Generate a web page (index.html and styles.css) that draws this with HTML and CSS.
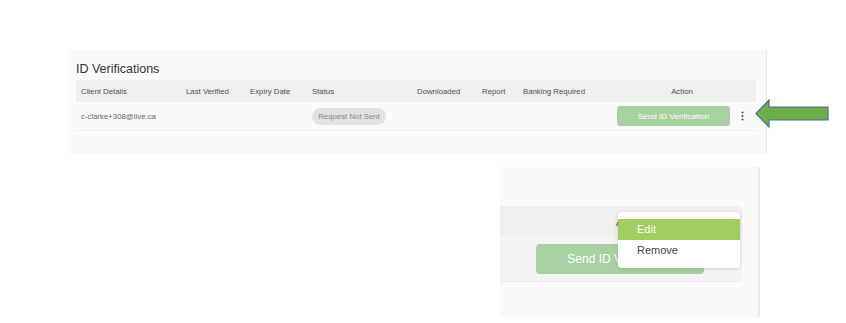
FILE: index.html
```html
<!DOCTYPE html>
<html lang="en">
<head>
  <meta charset="UTF-8">
  <meta name="viewport" content="width=device-width, initial-scale=1.0">
  <title>ID Verifications</title>
  <link rel="stylesheet" href="styles.css">
</head>
<body>
  <div class="panel">
    <h1 class="title">ID Verifications</h1>
    <div class="grid head">
      <div class="cell">Client Details</div>
      <div class="cell">Last Verified</div>
      <div class="cell">Expiry Date</div>
      <div class="cell">Status</div>
      <div class="cell">Downloaded</div>
      <div class="cell">Report</div>
      <div class="cell">Banking Required</div>
      <div class="cell action-head">Action</div>
    </div>
    <div class="grid row">
      <div class="cell">c-clarke+308@live.ca</div>
      <div class="cell"></div>
      <div class="cell"></div>
      <div class="cell"><span class="pill">Request Not Sent</span></div>
      <div class="cell"></div>
      <div class="cell"></div>
      <div class="cell"></div>
      <div class="cell action">
        <button class="send">Send ID Verification</button>
        <svg class="kebab" width="3" height="10" viewBox="0 0 3 10">
          <circle cx="1.5" cy="1.5" r="1" fill="#444"/>
          <circle cx="1.5" cy="5" r="1" fill="#444"/>
          <circle cx="1.5" cy="8.5" r="1" fill="#444"/>
        </svg>
      </div>
    </div>

    <!-- annotation arrow -->
    <svg class="arrow" width="76" height="30" viewBox="0 0 76 30">
      <polygon points="2,14.5 15,1 15,8 74,8 74,21 15,21 15,28" fill="#70ad47" stroke="#41719c" stroke-width="1.2" stroke-linejoin="miter"/>
    </svg>
  </div>

  <div class="panel zoomed">
    <div class="zoom-head"><span class="zoom-action">Action</span></div>
    <div class="zoom-row">
      <button class="send big">Send ID Verification</button>
    </div>

    <div class="menu">
      <div class="menu-item active">Edit</div>
      <div class="menu-item">Remove</div>
    </div>
  </div>
</body>
</html>
```

FILE: styles.css
```css
body {
  margin: 0;
  background: #ffffff;
  font-family: "Liberation Sans", Arial, sans-serif;
  color: #555;
}
.panel {
  position: relative;
  box-sizing: border-box;
  margin: 50px 0 0 68px;
  width: 699px;
  height: 104px;
  padding: 9px 10px 0 8px;
  background: #fafafa;
  border-right: 1px solid #e6e6e6;
}
.title {
  margin: 0;
  font-size: 12.5px;
  font-weight: normal;
  line-height: 21px;
  color: #333;
}
.grid {
  display: grid;
  grid-template-columns: 105px 64px 62px 105px 65px 41px 77px 162px;
  align-items: center;
}
.cell {
  padding-left: 5px;
  font-size: 7.8px;
  white-space: nowrap;
}
.head {
  height: 22px;
  background: #efefef;
  color: #505050;
}
.action-head {
  padding-left: 12px;
  text-align: center;
}
.row {
  height: 28px;
  border-bottom: 1px solid #ececec;
  color: #666;
}
.pill {
  display: inline-block;
  width: 74px;
  height: 17px;
  line-height: 17px;
  border-radius: 9px;
  background: #e2e2e2;
  color: #8a8a8a;
  text-align: center;
}
.action {
  display: flex;
  align-items: center;
  padding-left: 22px;
}
.send {
  width: 113px;
  height: 20px;
  padding: 0;
  border: none;
  border-radius: 3px;
  background: #a8d1a1;
  color: #ffffff;
  font-family: inherit;
  font-size: 8.1px;
}
.kebab {
  margin-left: 11px;
}
.arrow {
  position: absolute;
  left: 686px;
  top: 49px;
}

/* zoomed crop with open menu */
.zoomed {
  margin: 13px 0 0 500px;
  width: 260px;
  height: 150px;
  padding: 39px 16px 0 0;
  border-right: 2px solid #ececec;
}
.zoom-head {
  height: 31px;
  background: #efefef;
  display: flex;
  align-items: center;
  padding-left: 116px;
}
.zoom-action {
  font-size: 11.5px;
  color: #555;
}
.zoom-row {
  height: 44px;
  background: #f4f4f4;
  border-bottom: 1px solid #ececec;
  display: flex;
  align-items: center;
  padding-left: 36px;
}
.send.big {
  width: 168px;
  height: 30px;
  border-radius: 4px;
  font-size: 12px;
}
.menu {
  position: absolute;
  left: 118px;
  top: 45px;
  width: 122px;
  padding: 7px 0;
  background: #ffffff;
  border-radius: 4px;
  box-shadow: 0 1px 4px rgba(0, 0, 0, 0.15);
}
.menu-item {
  height: 21px;
  line-height: 21px;
  padding-left: 19px;
  font-size: 11px;
  color: #444;
}
.menu-item.active {
  background: #a0cc60;
  color: #ffffff;
}
```
